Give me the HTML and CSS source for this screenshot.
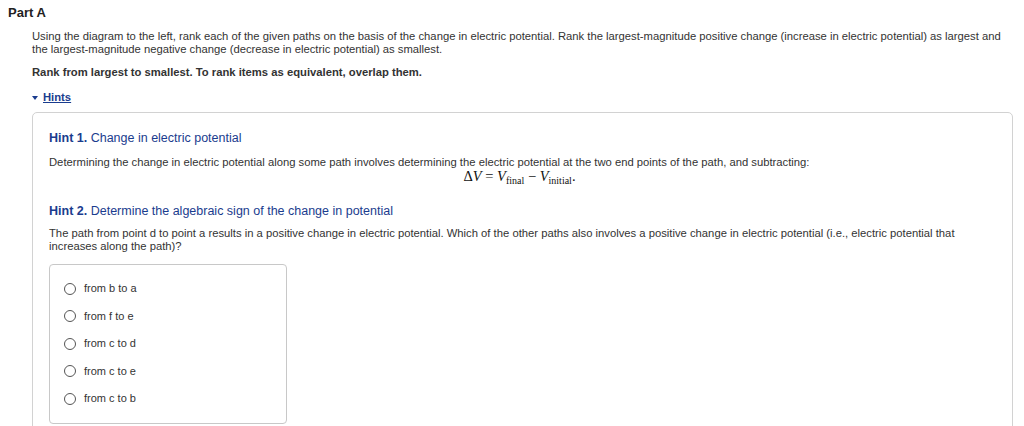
FILE: index.html
```
<!DOCTYPE html>
<html>
<head>
<meta charset="utf-8">
<link rel="stylesheet" href="styles.css">
</head>
<body>
<div class="page">
  <h2 class="part-title">Part A</h2>
  <div class="part-body">
    <p class="intro">Using the diagram to the left, rank each of the given paths on the basis of the change in electric potential. Rank the largest-magnitude positive change (increase in electric potential) as largest and the largest-magnitude negative change (decrease in electric potential) as smallest.</p>
    <p class="instr">Rank from largest to smallest. To rank items as equivalent, overlap them.</p>
    <div class="hints-toggle"><span class="caret"></span><a class="hints-link" href="#">Hints</a></div>
    <div class="hint-box">
      <div class="hint">
        <div class="hint-title"><b>Hint 1.</b> Change in electric potential</div>
        <p class="hint-text">Determining the change in electric potential along some path involves determining the electric potential at the two end points of the path, and subtracting:</p>
        <div class="formula">&Delta;<i>V</i> = <i>V</i><sub>final</sub> &minus; <i>V</i><sub>initial</sub>.</div>
      </div>
      <div class="hint">
        <div class="hint-title"><b>Hint 2.</b> Determine the algebraic sign of the change in potential</div>
        <p class="hint-text">The path from point d to point a results in a positive change in electric potential. Which of the other paths also involves a positive change in electric potential (i.e., electric potential that increases along the path)?</p>
        <div class="options">
          <label class="opt"><span class="radio"></span>from b to a</label>
          <label class="opt"><span class="radio"></span>from f to e</label>
          <label class="opt"><span class="radio"></span>from c to d</label>
          <label class="opt"><span class="radio"></span>from c to e</label>
          <label class="opt"><span class="radio"></span>from c to b</label>
        </div>
      </div>
    </div>
  </div>
</div>
</body>
</html>
```
FILE: styles.css
```
html, body {
  margin: 0;
  padding: 0;
  background: #fff;
}
body {
  font-family: "Liberation Sans", Arial, sans-serif;
  color: #333;
  font-size: 11.25px;
  line-height: 13px;
}
.page {
  padding: 5px 0 0 8px;
}
.part-title {
  margin: 0;
  font-size: 13px;
  line-height: 15px;
  font-weight: bold;
  color: #222;
}
.part-body {
  padding: 0 11px 0 24px;
}
.intro {
  margin: 10px 0 0 0;
}
.instr {
  margin: 10px 0 0 0;
  font-weight: bold;
}
.hints-toggle {
  margin-top: 12px;
  display: flex;
  align-items: center;
  height: 13px;
}
.caret {
  width: 0;
  height: 0;
  border-left: 3px solid transparent;
  border-right: 3px solid transparent;
  border-top: 4px solid #1a3c8e;
  margin-right: 5px;
}
.hints-link {
  color: #1a3c8e;
  font-weight: bold;
  text-decoration: underline;
}
.hint-box {
  margin-top: 8px;
  border: 1px solid #d2d2d2;
  border-radius: 5px;
  padding: 18px 16px 30px 16px;
  min-height: 320px;
}
.hint + .hint {
  margin-top: 21px;
}
.hint-title {
  font-size: 12.5px;
  line-height: 15px;
  color: #1a3c8e;
}
.hint-title b {
  color: #1a3c8e;
}
.hint-text {
  margin: 10px 0 0 0;
  padding-right: 30px;
}
.hint + .hint .hint-text {
  margin-top: 8px;
}
.formula {
  text-align: center;
  font-family: "Liberation Serif", "Times New Roman", serif;
  font-size: 14.5px;
  line-height: 14px;
  color: #111;
  margin-left: -6px;
}
.formula sub {
  font-size: 10px;
  font-style: normal;
  font-weight: normal;
  vertical-align: -3px;
  line-height: 0;
}
.options {
  margin-top: 11px;
  width: 238px;
  box-sizing: border-box;
  border: 1px solid #c8c8c8;
  border-radius: 4px;
  padding: 17px 0 18px 14px;
  display: flex;
  flex-direction: column;
  gap: 14.5px;
}
.opt {
  display: flex;
  align-items: center;
  height: 13px;
  font-size: 11px;
  color: #333;
}
.radio {
  width: 10px;
  height: 10px;
  border: 1px solid #555;
  border-radius: 50%;
  margin-right: 8px;
  box-sizing: content-box;
}
```
